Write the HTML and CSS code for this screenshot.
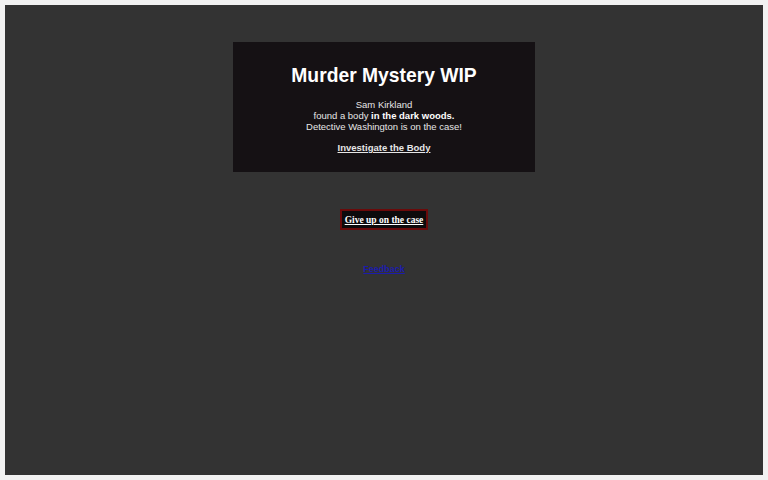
FILE: index.html
```html
<!DOCTYPE html>
<html lang="en">
<head>
  <meta charset="UTF-8">
  <title>Murder Mystery WIP</title>
  <link rel="stylesheet" href="styles.css">
</head>
<body>
  <div class="stage">
    <div class="case-card">
      <h1>Murder Mystery WIP</h1>
      <p class="story">
        Sam Kirkland<br>
        found a body <strong>in the dark woods.</strong><br>
        Detective Washington is on the case!
      </p>
      <a href="#" class="investigate">Investigate the Body</a>
    </div>

    <button type="button" class="give-up">Give up on the case</button>

    <a href="#" class="feedback">Feedback</a>
  </div>
</body>
</html>
```

FILE: styles.css
```css
html, body {
  margin: 0;
  background-color: #f2f2f2;
}
body {
  padding: 5px;
  font-family: 'Liberation Sans', Arial, sans-serif;
}
.stage {
  height: 470px;
  background-color: #333333;
  display: flex;
  flex-direction: column;
  align-items: center;
  padding-top: 37px;
  box-sizing: border-box;
}
.case-card {
  width: 302px;
  box-sizing: border-box;
  background-color: #151114;
  color: #f2f2f2;
  text-align: center;
  padding: 22px 10px 19px;
}
.case-card h1 {
  margin: 0;
  font-size: 19.3px;
  line-height: 23px;
  color: #ffffff;
}
.story {
  margin: 12px 0 10px;
  font-size: 9.5px;
  line-height: 11px;
  color: #e6e6e6;
}
.story strong {
  color: #ffffff;
}
.investigate {
  display: block;
  font-size: 9.5px;
  line-height: 11px;
  font-weight: bold;
  color: #e6e6e6;
}
.give-up {
  margin-top: 37px;
  height: 21px;
  padding: 0 3px;
  background-color: #0d0b0c;
  border: 2px solid #6a0a0a;
  color: #ffffff;
  font-family: 'Liberation Serif', 'Times New Roman', serif;
  font-weight: bold;
  font-size: 9.5px;
  text-decoration: underline;
}
.feedback {
  margin-top: 33px;
  font-size: 9px;
  line-height: 12px;
  font-weight: bold;
  color: #1c1cac;
}
```
